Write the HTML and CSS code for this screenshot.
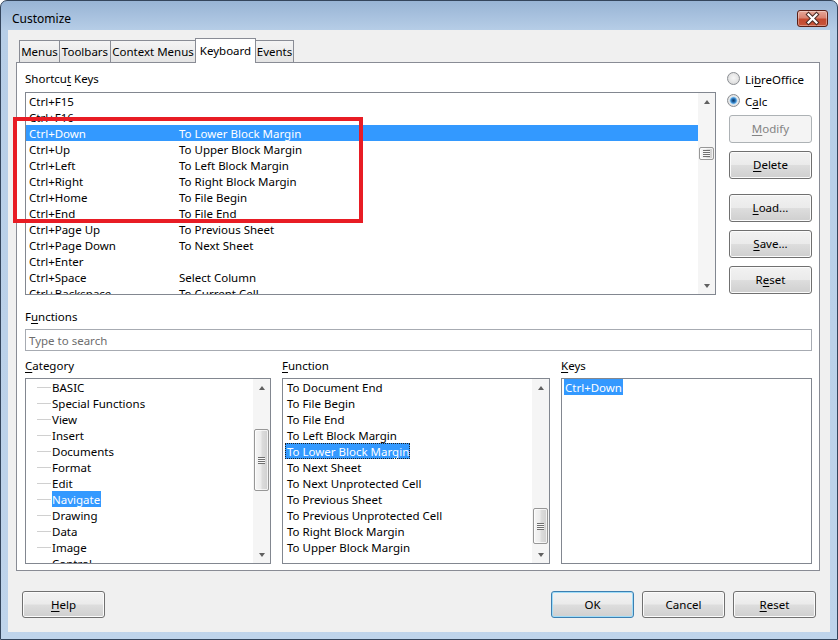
FILE: index.html
```html
<!DOCTYPE html>
<html>
<head>
<meta charset="utf-8">
<title>Customize</title>
<link rel="stylesheet" href="styles.css">
</head>
<body>
<div class="window">
  <div class="titlebar">
    <span class="title">Customize</span>
    <div class="close">
      <svg width="31" height="17" viewBox="0 0 31 17">
        <path d="M11.5 4.5 L19.5 12.5 M19.5 4.5 L11.5 12.5" stroke="#4a2a24" stroke-width="4.2" stroke-linecap="square" fill="none"/>
        <path d="M11.5 4.5 L19.5 12.5 M19.5 4.5 L11.5 12.5" stroke="#ffffff" stroke-width="2.2" stroke-linecap="square" fill="none"/>
      </svg>
    </div>
  </div>
  <div class="client">
    <div class="tabs">
      <div class="tab t-menus">Menus</div>
      <div class="tab t-toolbars">Toolbars</div>
      <div class="tab t-context">Context Menus</div>
      <div class="tab t-keyboard active">Keyboard</div>
      <div class="tab t-events">Events</div>
    </div>
    <div class="panel">
      <div class="top">
        <div class="shortcuts">
          <div class="label">Shortcu<u>t</u> Keys</div>
          <div class="listbox sk-list">
            <div class="rows">
              <div class="row"><span class="k">Ctrl+F15</span><span class="f"></span></div>
              <div class="row"><span class="k">Ctrl+F16</span><span class="f"></span></div>
              <div class="row sel"><span class="k">Ctrl+Down</span><span class="f">To Lower Block Margin</span></div>
              <div class="row"><span class="k">Ctrl+Up</span><span class="f">To Upper Block Margin</span></div>
              <div class="row"><span class="k">Ctrl+Left</span><span class="f">To Left Block Margin</span></div>
              <div class="row"><span class="k">Ctrl+Right</span><span class="f">To Right Block Margin</span></div>
              <div class="row"><span class="k">Ctrl+Home</span><span class="f">To File Begin</span></div>
              <div class="row"><span class="k">Ctrl+End</span><span class="f">To File End</span></div>
              <div class="row"><span class="k">Ctrl+Page Up</span><span class="f">To Previous Sheet</span></div>
              <div class="row"><span class="k">Ctrl+Page Down</span><span class="f">To Next Sheet</span></div>
              <div class="row"><span class="k">Ctrl+Enter</span><span class="f"></span></div>
              <div class="row"><span class="k">Ctrl+Space</span><span class="f">Select Column</span></div>
              <div class="row"><span class="k">Ctrl+Backspace</span><span class="f">To Current Cell</span></div>
            </div>
            <div class="vscroll">
              <div class="sbtn up"></div>
              <div class="strack"><div class="thumb" style="margin-top:37px;height:13px"><div class="grip"></div></div></div>
              <div class="sbtn down"></div>
            </div>
          </div>
        </div>
        <div class="side">
          <div class="radio-row"><span class="radio"></span><span>Li<u>b</u>reOffice</span></div>
          <div class="radio-row second"><span class="radio on"></span><span>C<u>a</u>lc</span></div>
          <div class="btn disabled b-modify"><span><u>M</u>odify</span></div>
          <div class="btn b-delete"><span><u>D</u>elete</span></div>
          <div class="btn b-load"><span><u>L</u>oad...</span></div>
          <div class="btn b-save"><span><u>S</u>ave...</span></div>
          <div class="btn b-reset"><span>R<u>e</u>set</span></div>
        </div>
      </div>
      <div class="label functions-label">F<u>u</u>nctions</div>
      <div class="search">Type to search</div>
      <div class="lower">
        <div class="col">
          <div class="label"><u>C</u>ategory</div>
          <div class="listbox low-list">
            <div class="rows">
              <div class="crow"><span class="tl"></span><span>BASIC</span></div>
              <div class="crow"><span class="tl"></span><span>Special Functions</span></div>
              <div class="crow"><span class="tl"></span><span>View</span></div>
              <div class="crow"><span class="tl"></span><span>Insert</span></div>
              <div class="crow"><span class="tl"></span><span>Documents</span></div>
              <div class="crow"><span class="tl"></span><span>Format</span></div>
              <div class="crow"><span class="tl"></span><span>Edit</span></div>
              <div class="crow"><span class="tl"></span><span class="hl">Navigate</span></div>
              <div class="crow"><span class="tl"></span><span>Drawing</span></div>
              <div class="crow"><span class="tl"></span><span>Data</span></div>
              <div class="crow"><span class="tl"></span><span>Image</span></div>
              <div class="crow"><span class="tl"></span><span>Control</span></div>
            </div>
            <div class="vscroll">
              <div class="sbtn up"></div>
              <div class="strack"><div class="thumb" style="margin-top:33px;height:62px"><div class="grip"></div></div></div>
              <div class="sbtn down"></div>
            </div>
          </div>
        </div>
        <div class="col">
          <div class="label"><u>F</u>unction</div>
          <div class="listbox low-list">
            <div class="rows">
              <div class="frow"><span>To Document End</span></div>
              <div class="frow"><span>To File Begin</span></div>
              <div class="frow"><span>To File End</span></div>
              <div class="frow"><span>To Left Block Margin</span></div>
              <div class="frow"><span class="hl focus">To Lower Block Margin</span></div>
              <div class="frow"><span>To Next Sheet</span></div>
              <div class="frow"><span>To Next Unprotected Cell</span></div>
              <div class="frow"><span>To Previous Sheet</span></div>
              <div class="frow"><span>To Previous Unprotected Cell</span></div>
              <div class="frow"><span>To Right Block Margin</span></div>
              <div class="frow"><span>To Upper Block Margin</span></div>
            </div>
            <div class="vscroll">
              <div class="sbtn up"></div>
              <div class="strack"><div class="thumb" style="margin-top:112px;height:36px"><div class="grip"></div></div></div>
              <div class="sbtn down"></div>
            </div>
          </div>
        </div>
        <div class="col">
          <div class="label"><u>K</u>eys</div>
          <div class="listbox low-list">
            <div class="rows">
              <div class="krow"><span class="hl">Ctrl+Down</span></div>
            </div>
          </div>
        </div>
      </div>
    </div>
    <div class="footer">
      <div class="btn"><span><u>H</u>elp</span></div>
      <div class="spacer"></div>
      <div class="btn default"><span>OK</span></div>
      <div class="btn"><span>Cancel</span></div>
      <div class="btn"><span><u>R</u>eset</span></div>
    </div>
  </div>
  <div class="redbox"></div>
</div>
</body>
</html>
```
FILE: styles.css
```css
* { box-sizing: border-box; }
html, body { margin: 0; padding: 0; }
body {
  width: 838px;
  height: 640px;
  overflow: hidden;
  background: #ffffff;
  font-family: "Noto Sans", "Liberation Sans", sans-serif;
  font-size: 11.5px;
  color: #000;
}
u { text-decoration-thickness: 1px; text-underline-offset: 2px; }

.window {
  position: relative;
  width: 838px;
  height: 640px;
  border: 1px solid #34455c;
  border-radius: 7px 7px 0 0;
  background: linear-gradient(#98b4d5 0, #b7cee7 30px, #bfd4eb 100%);
  padding: 0 7px 7px 7px;
  display: flex;
  flex-direction: column;
}
.titlebar {
  height: 29px;
  flex: none;
  display: flex;
  justify-content: space-between;
  align-items: flex-start;
}
.title {
  margin: 10px 0 0 4px;
  line-height: 16px;
  font-size: 12px;
}
.close {
  margin: 9px 2px 0 0;
  width: 31px;
  height: 17px;
  border: 1px solid #5a1f16;
  border-radius: 3px;
  background: linear-gradient(#e6a899 0%, #d98371 45%, #c4492f 55%, #c8553a 100%);
  box-shadow: inset 0 0 0 1px rgba(255,255,255,0.35);
  display: flex;
  align-items: center;
  justify-content: center;
  overflow: hidden;
}
.close svg { display: block; flex: none; }

.client {
  flex: 1;
  background: #f0f0f0;
  padding-top: 8px;
  display: flex;
  flex-direction: column;
}

/* tabs */
.tabs {
  display: flex;
  align-items: flex-end;
  height: 24px;
  margin-left: 11px;
  position: relative;
  z-index: 2;
}
.tab {
  height: 22px;
  padding-top: 1px;
  line-height: 20px;
  border: 1px solid #898c95;
  border-bottom: none;
  background: linear-gradient(#f4f4f4, #e4e4e4);
  text-align: center;
  white-space: nowrap;
  margin-left: -1px;
}
.tab:first-child { margin-left: 0; }
.tab.active {
  height: 25px;
  padding-top: 1px;
  line-height: 22px;
  margin-bottom: -1px;
  background: #ffffff;
  position: relative;
  z-index: 3;
}
.t-menus { width: 41px; }
.t-toolbars { width: 52px; }
.t-context { width: 86px; }
.t-keyboard { width: 61px; }
.t-events { width: 39px; }

/* panel */
.panel {
  height: 509px;
  margin: 0 10px 0 8px;
  border: 1px solid #898c95;
  background: #ffffff;
  padding: 7px 7px 0 8px;
  position: relative;
  z-index: 1;
}
.label {
  height: 16px;
  padding-top: 1px;
  line-height: 15px;
  white-space: nowrap;
}

.top {
  display: grid;
  grid-template-columns: 691px 83px;
  column-gap: 13px;
}
.sk-list { margin-top: 6px; height: 203px; }

.listbox {
  border: 1px solid #828790;
  background: #ffffff;
  display: flex;
  overflow: hidden;
}
.rows { flex: 1; overflow: hidden; min-width: 0; }
.row {
  display: flex;
  height: 16px;
  padding-top: 1px;
  line-height: 15px;
  padding-left: 3px;
  white-space: nowrap;
}
.row .k { width: 150px; flex: none; }
.row.sel { background: #3399ff; color: #ffffff; }

.vscroll {
  width: 17px;
  flex: none;
  display: flex;
  flex-direction: column;
  background: #f5f5f5;
}
.sbtn {
  height: 17px;
  flex: none;
  display: flex;
  align-items: center;
  justify-content: center;
}
.sbtn::after {
  content: "";
  width: 0;
  height: 0;
  border-left: 3.5px solid transparent;
  border-right: 3.5px solid transparent;
}
.sbtn.up::after { border-bottom: 4px solid #606060; }
.sbtn.down::after { border-top: 4px solid #606060; }
.strack { flex: 1; display: flex; flex-direction: column; align-items: center; }
.thumb {
  width: 15px;
  border: 1px solid #979797;
  border-radius: 2px;
  background: linear-gradient(to right, #f6f6f6 0%, #ececec 45%, #dcdcdc 55%, #d0d0d0 100%);
  box-shadow: inset 0 0 0 1px rgba(255,255,255,0.7);
  display: flex;
  align-items: center;
  justify-content: center;
}
.grip {
  width: 7px;
  height: 7px;
  background: repeating-linear-gradient(#6f6f6f 0 1px, #f8f8f8 1px 2px);
}

.side { display: flex; flex-direction: column; }
.radio-row {
  display: flex;
  align-items: center;
  height: 16px;
  line-height: 15px;
  margin-left: -2px;
  gap: 5px;
  white-space: nowrap;
}
.radio-row span:last-child { padding-top: 2px; }
.radio-row.second { margin-top: 6px; }
.radio {
  width: 13px;
  height: 13px;
  flex: none;
  border-radius: 50%;
  border: 1px solid #8a8d92;
  background: radial-gradient(circle at 50% 45%, #f7f7f7 0, #e6e6e6 50%, #cfcfcf 100%);
}
.radio.on {
  background: radial-gradient(circle at 50% 50%, #0e3d6b 0, #1f5f9c 1.5px, #4a9adb 2.8px, #a8d4f4 3.6px, #e9e9e9 4.3px, #d7d7d7 100%);
}

.btn {
  width: 83px;
  height: 28px;
  flex: none;
  border: 1px solid #707070;
  border-radius: 3px;
  background: linear-gradient(#f2f2f2 0%, #ebebeb 48%, #dddddd 52%, #cfcfcf 100%);
  box-shadow: inset 0 0 0 1px #fbfbfb;
  display: flex;
  align-items: center;
  justify-content: center;
  line-height: 16px;
  white-space: nowrap;
}
.btn.disabled {
  border-color: #adb2b5;
  background: #f4f4f4;
  box-shadow: none;
  color: #838383;
}
.b-modify { margin-top: 7px; }
.b-delete { margin-top: 8px; }
.b-load { margin-top: 15px; }
.b-save { margin-top: 8px; }
.b-reset { margin-top: 8px; }

.functions-label { margin-top: 13px; }
.search {
  margin-top: 5px;
  height: 22px;
  width: 787px;
  border: 1px solid #a7abb2;
  background: #ffffff;
  padding: 1px 0 0 3px;
  line-height: 19px;
  color: #6d6d6d;
}

.lower {
  margin-top: 6px;
  display: grid;
  grid-template-columns: 246px 268px 251px;
  column-gap: 11px;
}
.low-list { margin-top: 5px; height: 186px; }
.crow, .frow, .krow {
  display: flex;
  align-items: center;
  height: 16px;
  padding-top: 1px;
  line-height: 15px;
  white-space: nowrap;
}
.crow { padding-left: 11px; }
.frow { padding-left: 2px; }
.krow { padding-left: 2px; }
.tl {
  width: 14px;
  height: 1px;
  flex: none;
  background: #d0d0d0;
  margin-right: 1px;
}
.frow span { padding-left: 2px; padding-right: 1px; }
.krow span { padding-left: 1px; padding-right: 1px; }
.hl {
  align-self: flex-start;
  margin-top: -1px;
  padding-top: 1px;
  height: 16px;
  background: #3399ff;
  color: #ffffff;
  padding-right: 1px;
}
.focus { outline: 1px dotted #202020; outline-offset: -1px; }

.footer {
  margin-top: 20px;
  padding: 0 14px;
  display: flex;
  gap: 8px;
}
.footer .btn { height: 27px; }
.spacer { flex: 1; }
.btn.default {
  border-color: #3c7fb1;
  box-shadow: inset 0 0 0 1px #9fdcf8;
}

.redbox {
  position: absolute;
  z-index: 10;
  left: 12px;
  top: 116px;
  width: 350px;
  height: 106px;
  border: 4px solid #e81c24;
  pointer-events: none;
}
```
